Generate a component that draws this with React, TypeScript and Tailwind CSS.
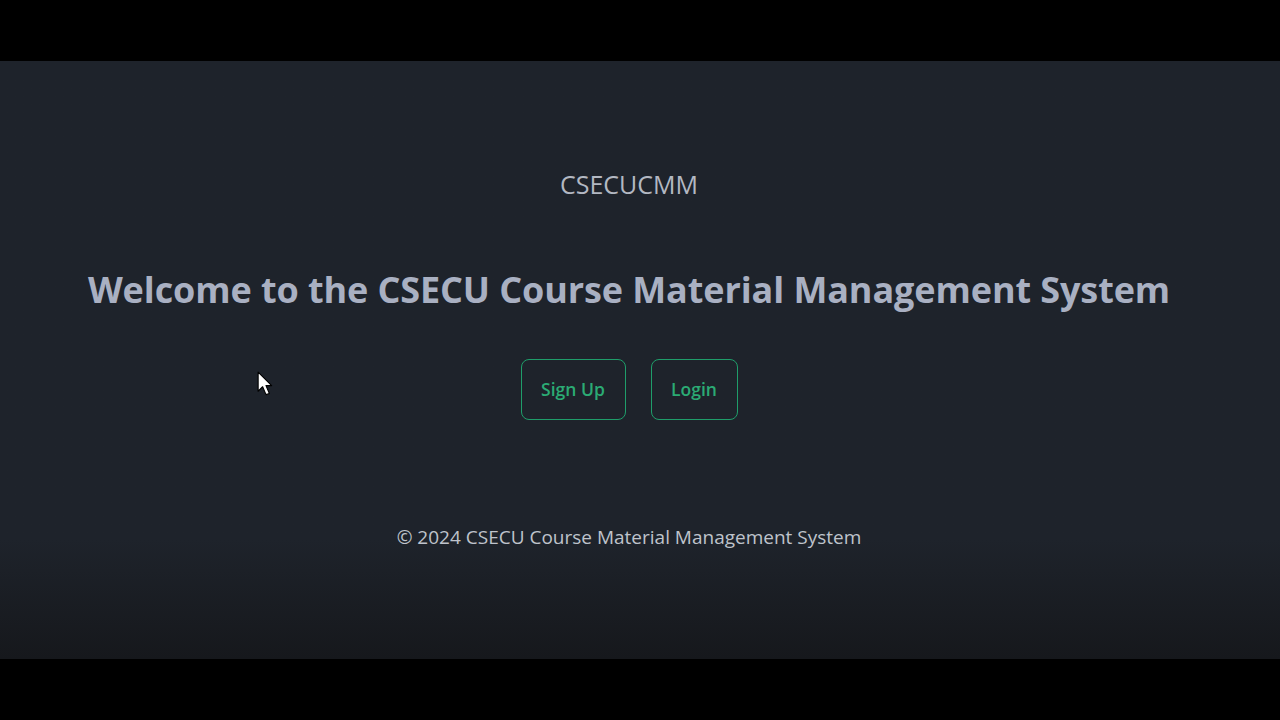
const Cursor = () => (
  <svg width="18" height="27" viewBox="0 0 16 24" className="absolute left-[257px] top-[371px]">
    <path d="M1 1 L1 18 L5 14 L8 21 L11 20 L8 13 L13 13 Z" fill="#fff" stroke="#000" strokeWidth="1" strokeLinejoin="round" />
  </svg>
);

export default function App() {
  return (
    <div className="relative min-h-screen bg-black flex flex-col" style={{ fontFamily: '"Open Sans", "Noto Sans", sans-serif' }}>
      <div className="h-[61px]" />
      <main className="h-[598px] pr-[22px] flex flex-col items-center bg-gradient-to-b from-[#1e232b] from-80% to-[#16181c]">
        <header className="pt-[105px]">
          <h2 className="text-[25px] leading-[36px] text-[#b3b8c2]">CSECUCMM</h2>
        </header>
        <h1 className="mt-[64px] text-[36px] leading-[48px] font-bold text-[#a9b0c2] tracking-[-0.1px]">
          Welcome to the CSECU Course Material Management System
        </h1>
        <div className="mt-[45px] flex gap-[25px]">
          <button className="h-[61px] w-[105px] rounded-lg border border-[#1f9d6a] text-[17.5px] font-semibold text-[#2bab74]">
            Sign Up
          </button>
          <button className="h-[61px] w-[87px] rounded-lg border border-[#1f9d6a] text-[17.5px] font-semibold text-[#2bab74]">
            Login
          </button>
        </div>
        <footer className="mt-[102px]">
          <p className="text-[19px] leading-[30px] text-[#bfc3cb]">© 2024 CSECU Course Material Management System</p>
        </footer>
      </main>
      <div className="h-[61px]" />
      <Cursor />
    </div>
  );
}
